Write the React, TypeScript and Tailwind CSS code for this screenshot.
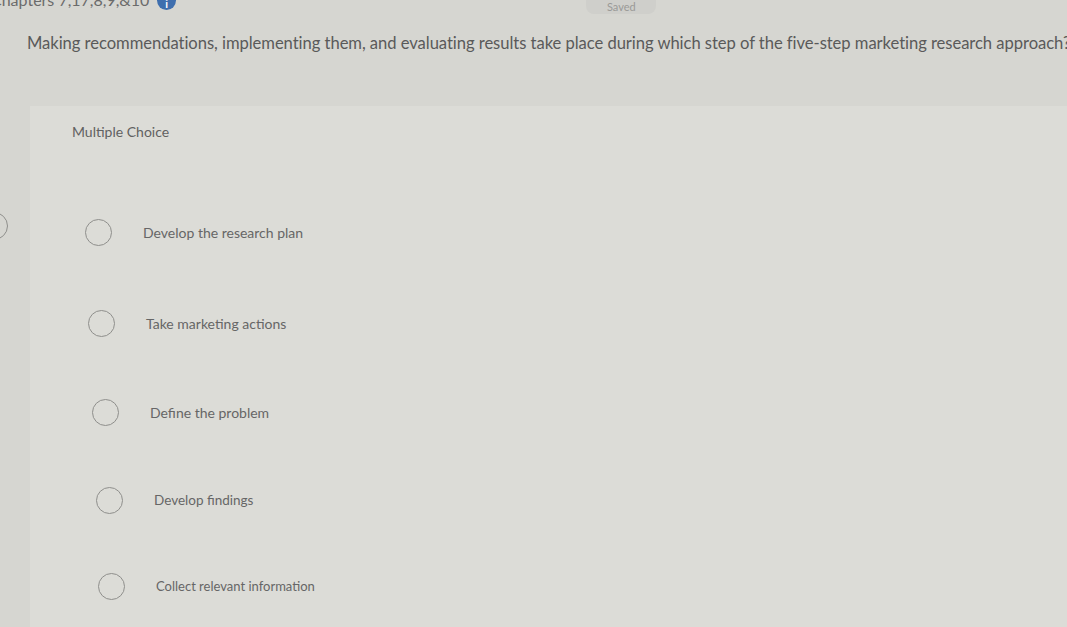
import React from "react";

const options = [
  { label: "Develop the research plan", row: "mt-[80px] pl-[55px]", text: "text-[14px]" },
  { label: "Take marketing actions", row: "mt-[64px] pl-[58px]", text: "text-[14px]" },
  { label: "Define the problem", row: "mt-[62px] pl-[62px]", text: "text-[14px]" },
  { label: "Develop findings", row: "mt-[61px] pl-[66px]", text: "text-[13.5px]" },
  { label: "Collect relevant information", row: "mt-[59px] pl-[68px]", text: "text-[13px]" },
];

export default function App() {
  return (
    <div
      className="relative flex h-[627px] w-[1067px] flex-col overflow-hidden bg-[#d6d6d1]"
      style={{ fontFamily: "Lato, 'Open Sans', sans-serif" }}
    >
      {/* top strip */}
      <div className="flex h-[106px] shrink-0 flex-col">
        <div className="-mt-[10px] flex h-[20px] items-center">
          <span className="-ml-[9px] whitespace-nowrap text-[16px] leading-none text-[#6b6b6b]">
            Chapters 7,17,8,9,&amp;10
          </span>
          <span className="ml-[8px] flex h-[19px] w-[19px] items-center justify-center rounded-full bg-[#3f6fae] pt-[6px] text-[11px] font-bold leading-none text-white">
            i
          </span>
          <span className="ml-[410px] mt-[4px] flex h-[24px] w-[70px] items-end justify-center rounded-[8px] bg-[#cfcfcb] pb-[2px] text-[11px] leading-none text-[#9a9a97]">
            Saved
          </span>
        </div>
        <p className="ml-[27px] mt-[25px] whitespace-nowrap text-[16.6px] leading-none tracking-[-0.05px] text-[#5a5a5a]">
          Making recommendations, implementing them, and evaluating results take place during which step of the five-step marketing research approach?
        </p>
      </div>

      {/* panel */}
      <div className="ml-[30px] flex flex-1 flex-col bg-[#dcdcd7] pt-[19px]">
        <div className="ml-[42px] text-[14px] leading-none text-[#616161]">Multiple Choice</div>
        <div className="flex flex-col">
          {options.map((o) => (
            <div key={o.label} className={`flex h-[27px] items-center ${o.row}`}>
              <div className="box-border h-[27px] min-h-[27px] w-[27px] min-w-[27px] rounded-full border-[1.5px] border-[#8f8f8c]" />
              <span className={`ml-[31px] leading-none text-[#666666] ${o.text}`}>{o.label}</span>
            </div>
          ))}
        </div>
      </div>

      {/* partial element at left edge */}
      <div className="absolute left-[-20px] top-[212px] h-[28px] w-[28px] rounded-full border-[1.5px] border-[#8f8f8c]" />
    </div>
  );
}
